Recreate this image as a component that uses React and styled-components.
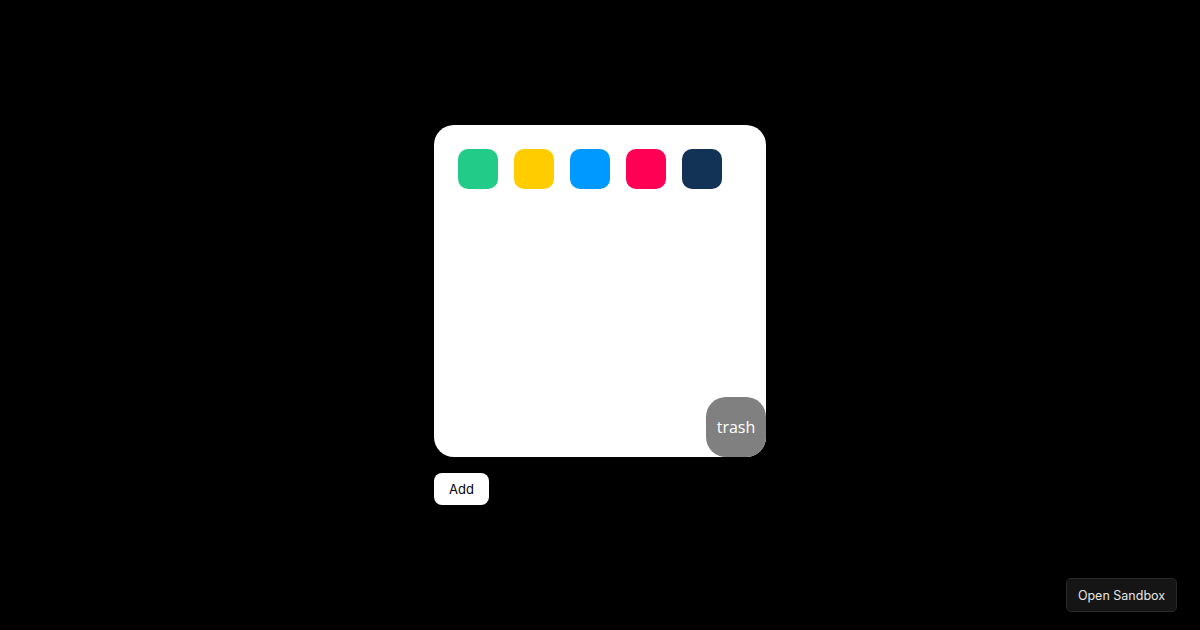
import React from "react";
import styled, { createGlobalStyle } from "styled-components";

const GlobalStyle = createGlobalStyle`
  html, body {
    margin: 0;
    padding: 0;
    background: #000;
  }
  body {
    font-family: Inter, "Liberation Sans", sans-serif;
  }
`;

const Page = styled.div`
  width: 1200px;
  height: 630px;
  display: flex;
  align-items: center;
  justify-content: center;
`;

const Column = styled.div`
  display: flex;
  flex-direction: column;
  align-items: flex-start;
  gap: 16px;
`;

const Card = styled.div`
  position: relative;
  width: 332px;
  height: 332px;
  background: #fff;
  border-radius: 20px;
  padding: 24px;
  box-sizing: border-box;
  display: flex;
  align-items: flex-start;
  gap: 16px;
`;

const Swatch = styled.div`
  width: 40px;
  height: 40px;
  border-radius: 10px;
  background: ${props => props.color};
  flex-shrink: 0;
`;

const Trash = styled.div`
  position: absolute;
  right: 0;
  bottom: 0;
  width: 60px;
  height: 60px;
  border-radius: 20px;
  background: #808080;
  color: #fff;
  display: flex;
  align-items: center;
  justify-content: center;
  font-family: "Open Sans", sans-serif;
  font-size: 16px;
`;

const AddButton = styled.button`
  height: 32px;
  width: 55px;
  padding: 0;
  border: none;
  border-radius: 8px;
  background: #fff;
  color: #000;
  font-family: Inter, "Liberation Sans", sans-serif;
  font-size: 13px;
  cursor: pointer;
`;

const SandboxButton = styled.button`
  position: fixed;
  right: 23px;
  bottom: 18px;
  height: 34px;
  width: 111px;
  padding: 0;
  background: #151515;
  border: 1px solid #2a2a2a;
  border-radius: 5px;
  color: #e6e6e6;
  font-family: Inter, "Liberation Sans", sans-serif;
  font-size: 12.5px;
  cursor: pointer;
`;

const colors = ["#22cc88", "#ffcc00", "#0099ff", "#ff0055", "#133356"];

export default function App() {
  return (
    <>
      <GlobalStyle />
      <Page>
        <Column>
          <Card>
            {colors.map(c => (
              <Swatch key={c} color={c} />
            ))}
            <Trash>trash</Trash>
          </Card>
          <AddButton>Add</AddButton>
        </Column>
      </Page>
      <SandboxButton>Open Sandbox</SandboxButton>
    </>
  );
}
